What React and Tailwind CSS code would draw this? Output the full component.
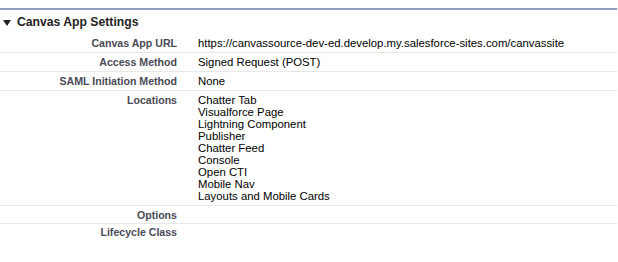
import React from "react";

const rows = [
  { label: "Canvas App URL", values: ["https://canvassource-dev-ed.develop.my.salesforce-sites.com/canvassite"], pad: "py-[3px]" },
  { label: "Access Method", values: ["Signed Request (POST)"], pad: "py-[3px]" },
  { label: "SAML Initiation Method", values: ["None"], pad: "py-[3px]" },
  {
    label: "Locations",
    values: [
      "Chatter Tab",
      "Visualforce Page",
      "Lightning Component",
      "Publisher",
      "Chatter Feed",
      "Console",
      "Open CTI",
      "Mobile Nav",
      "Layouts and Mobile Cards",
    ],
    pad: "py-[3px]",
  },
  { label: "Options", values: [], pad: "pt-[3px] pb-[2px]" },
  { label: "Lifecycle Class", values: [], last: true, pad: "py-[2px]" },
];

export default function App() {
  return (
    <div
      className="w-[618px] h-[262px] bg-white overflow-hidden pt-2"
      style={{ fontFamily: '"Liberation Sans", Arial, sans-serif' }}
    >
      <div className="w-[617px] border-t-2 border-[#8d9cbf]">
        <div className="h-6 flex items-center pl-[3px]">
          <svg width="8" height="6" viewBox="0 0 8 6" className="mr-[6px] mt-px">
            <polygon points="0,0 8,0 4,6" fill="#222" />
          </svg>
          <span className="text-[12.2px] font-bold text-[#222] leading-none">Canvas App Settings</span>
        </div>
        <div className="flex flex-col">
          {rows.map((r) => (
            <div
              key={r.label}
              className={`flex ${r.pad} ${r.last ? "" : "border-b border-[#e8e8e8]"}`}
            >
              <div className="w-[177px] shrink-0 text-right text-[10.6px] font-bold text-[#4a4a56] leading-[12px] min-h-[12px]">
                {r.label}
              </div>
              <div className="pl-[21px] text-[11.35px] text-black leading-[12px]">
                {r.values.map((v) => (
                  <div key={v}>{v}</div>
                ))}
              </div>
            </div>
          ))}
        </div>
      </div>
    </div>
  );
}
